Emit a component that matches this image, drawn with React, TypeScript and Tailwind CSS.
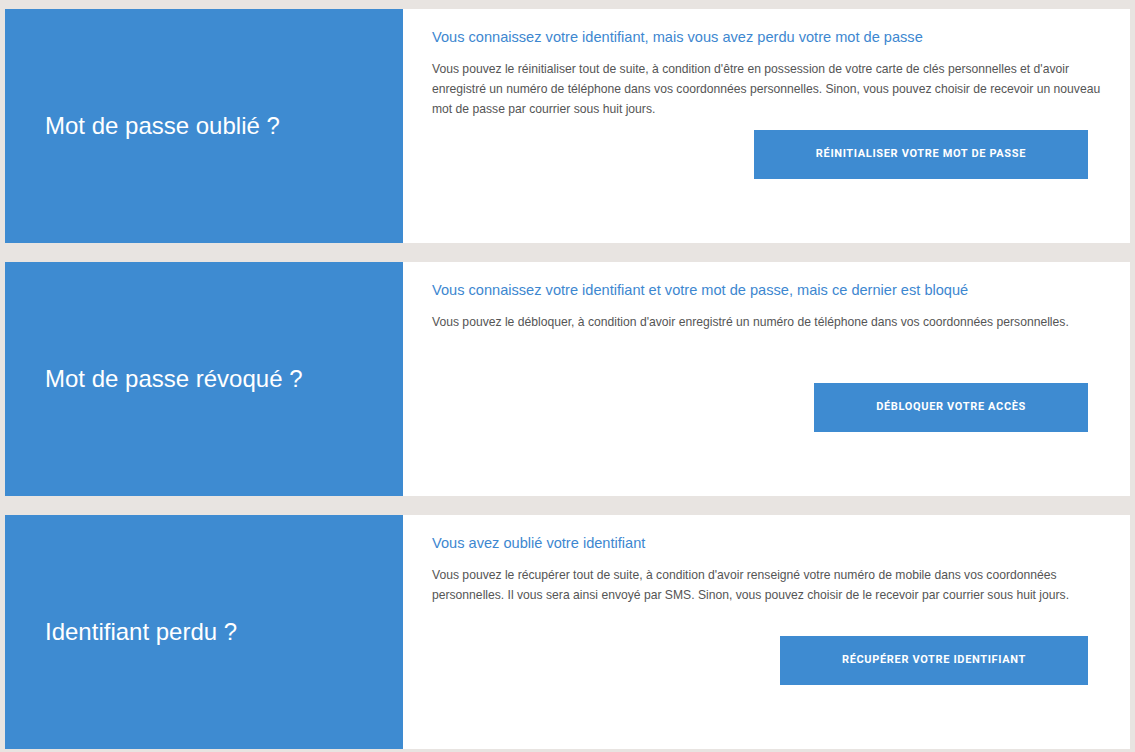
const items = [
  {
    title: "Mot de passe oublié ?",
    heading: "Vous connaissez votre identifiant, mais vous avez perdu votre mot de passe",
    text: "Vous pouvez le réinitialiser tout de suite, à condition d'être en possession de votre carte de clés personnelles et d'avoir enregistré un numéro de téléphone dans vos coordonnées personnelles. Sinon, vous pouvez choisir de recevoir un nouveau mot de passe par courrier sous huit jours.",
    action: "Réinitialiser votre mot de passe",
  },
  {
    title: "Mot de passe révoqué ?",
    heading: "Vous connaissez votre identifiant et votre mot de passe, mais ce dernier est bloqué",
    text: "Vous pouvez le débloquer, à condition d'avoir enregistré un numéro de téléphone dans vos coordonnées personnelles.",
    action: "Débloquer votre accès",
  },
  {
    title: "Identifiant perdu ?",
    heading: "Vous avez oublié votre identifiant",
    text: "Vous pouvez le récupérer tout de suite, à condition d'avoir renseigné votre numéro de mobile dans vos coordonnées personnelles. Il vous sera ainsi envoyé par SMS. Sinon, vous pouvez choisir de le recevoir par courrier sous huit jours.",
    action: "Récupérer votre identifiant",
  },
];

const App = () => {
  return (
    <div className="min-h-screen bg-[#e8e4e1] px-[5px] pt-[9px] pb-[3px] font-['Liberation_Sans',Arial,sans-serif]">
      <div className="flex flex-col gap-[19px]">
        {items.map((item) => (
          <section key={item.title} className="flex h-[234px] bg-white">
            <div className="flex w-[398px] shrink-0 items-center bg-[#3e8bd1] pl-[40px]">
              <h2 className="text-[24px] leading-none text-white">{item.title}</h2>
            </div>

            <div className="flex flex-1 flex-col pt-[18px] pr-[25px] pl-[29px]">
              <h3 className="text-[14.6px] leading-[20px] text-[#3d87d0]">{item.heading}</h3>
              <p className="mt-[12px] min-h-[60px] text-[12.15px] leading-[20px] text-[#555]">{item.text}</p>
              <div className="mt-[11px] mr-[17px] flex justify-end">
                <button className="h-[49px] bg-[#3e8bd1] px-[62px] font-['Roboto',sans-serif] text-[11px] font-bold tracking-[0.65px] uppercase text-white">
                  {item.action}
                </button>
              </div>
            </div>
          </section>
        ))}
      </div>
    </div>
  );
};

export default App;
